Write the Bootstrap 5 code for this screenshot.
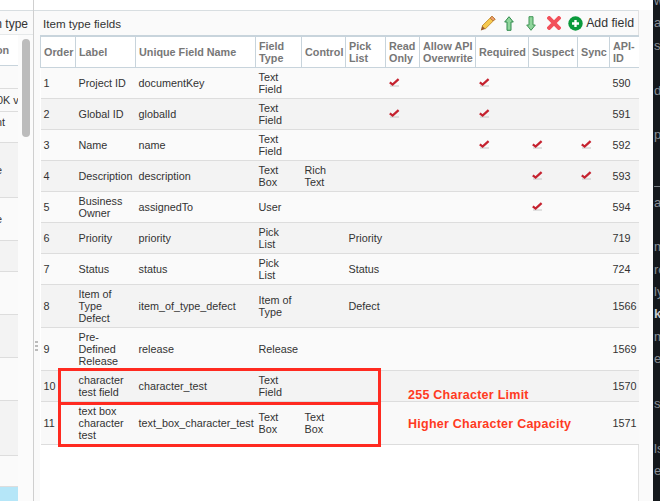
<!DOCTYPE html>
<html lang="en">
<head>
<meta charset="utf-8">
<title>Item type fields</title>
<link rel="stylesheet" href="https://cdn.jsdelivr.net/npm/bootstrap@5.3.0/dist/css/bootstrap.min.css">
<style>
html,body{margin:0;height:501px;width:660px;overflow:hidden;background:#fff}
body{font-family:"Liberation Sans",Arial,sans-serif;font-size:10.8px;line-height:12px;color:#333}
.shell{height:501px}
.topgap{height:10px;flex:none;background:#fff}
.pane-left{width:33px;flex:none}
.pane-left-in{flex:1;min-height:0;border-top:1px solid #d8dee1;background:#fbfbfb;position:relative}
.band{height:24px;flex:none;background:#fafafa;font-size:11.6px;line-height:24px}
.band-left{display:flex;justify-content:flex-end;padding-right:5px;border-bottom:1px solid #e6e9ea;white-space:nowrap;overflow:hidden;font-size:12px;line-height:26px}
.band-left span{flex:none}
.bandtxt{padding-top:2px}
.ltable{width:18px;overflow:hidden}
.lrow{display:flex;align-items:center;white-space:nowrap;border-bottom:1px solid #ddd;flex:none;background:#fafafa}
.lrow span{flex:none}
.lrow.alt{background:#f3f3f3}
.lrow.head{height:31px;background:#fff;font-weight:700;color:#777;border-bottom:1px solid #c8d4dc;margin-top:0}
.h23{height:23px}.h31{height:31px}.h43{height:43px}.h55{height:55px}
.lrow.sel{background:#b5e6f8;border:0;height:14px;align-items:flex-start;padding-top:11px}
.cut4{margin-left:-4px}.cut2{margin-left:-3px}.raise{padding-bottom:10px}
.thumb{position:absolute;left:22px;top:28px;width:8px;height:98px;border-radius:4px;background:#bcbcbc}
.splitter{width:7px;flex:none;border-left:1px solid #cfcfcf;background:#fafafa;position:relative}
.pane-split-top{border-top:1px solid #d8dee1;flex:1}
.grip{position:absolute;left:1px;top:341px;width:3px;height:10px;background:repeating-linear-gradient(#bbb 0 2px,transparent 2px 4px)}
.pane-main{width:598px;flex:none;position:relative}
.pane-main-in{flex:1;border-top:1px solid #d8dee1;min-height:0}
.band-main{padding-left:3px;padding-right:4px}
.tool{display:block;flex:none}
.gap-up{margin-left:8px}.gap-down{margin-left:12px}.gap-x{margin-left:11px}.gap-add{margin-left:7px}
.addtxt{font-size:12.3px;color:#333;margin-left:3px}
.ftable{table-layout:fixed;width:598px;margin:0;border-collapse:collapse;font-size:10.8px;line-height:12px;color:#333}
.ftable th,.ftable td{padding:3px;vertical-align:middle;color:#333;box-shadow:none}
.ftable th{font-weight:700;color:#777;background:#fff;border-top:2px solid #c8d4dc;border-bottom:1px solid #c8d4dc;border-left:1px solid #c8d4dc;height:31px;line-height:12px;padding:2px 0 2px 3px}
.ftable td{border:0;border-bottom:1px solid #ddd;background:#fafafa}
.ftable tbody tr:nth-child(even) td{background:#f3f3f3}
.ftable tbody tr:nth-child(11) td{background:#f9f9f9}
.ck{display:block}
.gutter{width:15px;flex:none;background:#fff}
.gutter-in{flex:1;border-left:1px solid #e2e2e2;background:#fafafa;margin-top:10px}
.darkside{width:7px;flex:none;background:#14181c;color:#8b9095;font-size:13px;overflow:hidden;padding-left:1px}
.darkline{height:22.4px;line-height:22.4px;white-space:nowrap;overflow:hidden}
.darkline:first-child{margin-top:-10px}
.darkline.strong{font-weight:700;color:#c8ccd0}
.box{position:absolute;left:18px;width:323px;border:3px solid #ff2a20;pointer-events:none}
.box-a{top:368px;height:37px}
.box-b{top:402px;height:45px}
.note{position:absolute;left:368px;font-size:12.5px;line-height:14px;font-weight:700;color:#ff3a22;white-space:nowrap;letter-spacing:.25px}
.note-a{top:388px}.note-b{top:417px}
</style>
</head>
<body>
<svg width="0" height="0" class="d-block position-absolute">
  <defs>
    <g id="chk">
      <path d="M1 8 L10 8" stroke="#c4c4c4" stroke-width="1"/>
      <path d="M.8 4.4 L3.6 6.6 L9.6 1.2" fill="none" stroke="#c5222f" stroke-width="2.3"/>
    </g>
  </defs>
</svg>
<div class="shell d-flex">
  <div class="pane-left d-flex flex-column">
    <div class="topgap"></div>
    <div class="pane-left-in d-flex flex-column">
      <div class="band band-left"><span>Item type</span></div>
      <div class="ltable d-flex flex-column">
        <div class="lrow head"><span class="cut4">on</span></div>
        <div class="lrow h23"></div>
        <div class="lrow h23"><span class="cut2">0K version</span></div>
        <div class="lrow h31 raise"><span class="cut4">nt</span></div>
        <div class="lrow h55 alt"><span class="cut4">e</span></div>
        <div class="lrow h43"><span class="cut4">e</span></div>
        <div class="lrow h31 alt"></div>
        <div class="lrow h43"></div>
        <div class="lrow h43 alt"></div>
        <div class="lrow h43"></div>
        <div class="lrow h55 alt"></div>
        <div class="lrow h31"></div>
        <div class="lrow sel"><span class="cut4">w</span></div>
      </div>
      <div class="thumb"></div>
    </div>
  </div>
  <div class="splitter d-flex flex-column">
    <div class="topgap"></div>
    <div class="pane-split-top"></div>
    <div class="grip"></div>
  </div>
  <div class="pane-main d-flex flex-column">
    <div class="topgap"></div>
    <div class="pane-main-in">
      <div class="band band-main d-flex align-items-center">
        <span class="me-auto bandtxt">Item type fields</span>
        <svg class="tool" width="16" height="16" viewBox="0 0 16 16" aria-hidden="true"><path d="M12 1.2 L15 4.2 L5.2 14 L2 11 Z" fill="#f6c94e" stroke="#c9963a" stroke-width="1"/><path d="M12 1.2 L15 4.2 L13.2 6 L10.2 3 Z" fill="#f0a070" stroke="#b8783a" stroke-width="1"/><path d="M2 11 L5.2 14 L.8 15.4 Z" fill="#9a5a28"/></svg>
        <svg class="tool gap-up" width="10" height="15" viewBox="0 0 10 15" aria-hidden="true"><path d="M5 .7 L9.3 6 H7 V14.3 H3 V6 H.7 Z" fill="#8fd59b" stroke="#2f8a4c" stroke-width="1"/></svg>
        <svg class="tool gap-down" width="10" height="15" viewBox="0 0 10 15" aria-hidden="true"><path d="M5 14.3 L9.3 9 H7 V.7 H3 V9 H.7 Z" fill="#8fd59b" stroke="#3f9455" stroke-width="1"/></svg>
        <svg class="tool gap-x" width="14" height="14" viewBox="0 0 14 14" aria-hidden="true"><path d="M2.2 2.2 L11.8 11.8 M11.8 2.2 L2.2 11.8" stroke="#f2505a" stroke-width="4" stroke-linecap="square"/></svg>
        <svg class="tool gap-add" width="15" height="15" viewBox="0 0 15 15" aria-hidden="true"><circle cx="7.5" cy="7.5" r="7.2" fill="#0a9a3c"/><path d="M7.5 4 V11 M4 7.5 H11" stroke="#fff" stroke-width="2.4"/></svg>
        <span class="addtxt">Add field</span>
      </div>
      <table class="table ftable">
        <colgroup><col width="35"><col width="60"><col width="120"><col width="46"><col width="44"><col width="40"><col width="34"><col width="56"><col width="53"><col width="49"><col width="32"><col width="29"></colgroup>
        <thead>
          <tr><th>Order</th><th>Label</th><th>Unique Field Name</th><th>Field Type</th><th>Control</th><th>Pick List</th><th>Read Only</th><th>Allow API Overwrite</th><th>Required</th><th>Suspect</th><th>Sync</th><th>API-ID</th></tr>
        </thead>
        <tbody>
          <tr><td>1</td><td>Project ID</td><td>documentKey</td><td>Text Field</td><td></td><td></td><td><svg class="ck" width="11" height="9"><use href="#chk"/></svg></td><td></td><td><svg class="ck" width="11" height="9"><use href="#chk"/></svg></td><td></td><td></td><td>590</td></tr>
          <tr><td>2</td><td>Global ID</td><td>globalId</td><td>Text Field</td><td></td><td></td><td><svg class="ck" width="11" height="9"><use href="#chk"/></svg></td><td></td><td><svg class="ck" width="11" height="9"><use href="#chk"/></svg></td><td></td><td></td><td>591</td></tr>
          <tr><td>3</td><td>Name</td><td>name</td><td>Text Field</td><td></td><td></td><td></td><td></td><td><svg class="ck" width="11" height="9"><use href="#chk"/></svg></td><td><svg class="ck" width="11" height="9"><use href="#chk"/></svg></td><td><svg class="ck" width="11" height="9"><use href="#chk"/></svg></td><td>592</td></tr>
          <tr><td>4</td><td>Description</td><td>description</td><td>Text Box</td><td>Rich Text</td><td></td><td></td><td></td><td></td><td><svg class="ck" width="11" height="9"><use href="#chk"/></svg></td><td><svg class="ck" width="11" height="9"><use href="#chk"/></svg></td><td>593</td></tr>
          <tr><td>5</td><td>Business Owner</td><td>assignedTo</td><td>User</td><td></td><td></td><td></td><td></td><td></td><td><svg class="ck" width="11" height="9"><use href="#chk"/></svg></td><td></td><td>594</td></tr>
          <tr><td>6</td><td>Priority</td><td>priority</td><td>Pick List</td><td></td><td>Priority</td><td></td><td></td><td></td><td></td><td></td><td>719</td></tr>
          <tr><td>7</td><td>Status</td><td>status</td><td>Pick List</td><td></td><td>Status</td><td></td><td></td><td></td><td></td><td></td><td>724</td></tr>
          <tr><td>8</td><td>Item of Type Defect</td><td>item_of_type_defect</td><td>Item of Type</td><td></td><td>Defect</td><td></td><td></td><td></td><td></td><td></td><td>1566</td></tr>
          <tr><td>9</td><td>Pre-Defined Release</td><td>release</td><td>Release</td><td></td><td></td><td></td><td></td><td></td><td></td><td></td><td>1569</td></tr>
          <tr><td>10</td><td>character test field</td><td>character_test</td><td>Text Field</td><td></td><td></td><td></td><td></td><td></td><td></td><td></td><td>1570</td></tr>
          <tr><td>11</td><td>text box character test</td><td>text_box_character_test</td><td>Text Box</td><td>Text Box</td><td></td><td></td><td></td><td></td><td></td><td></td><td>1571</td></tr>
        </tbody>
      </table>
    </div>
    <div class="box box-a"></div>
    <div class="box box-b"></div>
    <div class="note note-a">255 Character Limit</div>
    <div class="note note-b">Higher Character Capacity</div>
  </div>
  <div class="gutter d-flex flex-column"><div class="gutter-in"></div></div>
  <div class="darkside">
    <div class="darkline">w</div><div class="darkline">at</div><div class="darkline">st</div><div class="darkline"></div><div class="darkline">di</div><div class="darkline"></div><div class="darkline">p</div><div class="darkline"></div><div class="darkline">_</div><div class="darkline">a:</div><div class="darkline"></div><div class="darkline">m</div><div class="darkline">ro</div><div class="darkline">ly</div><div class="darkline strong">k</div><div class="darkline">m</div><div class="darkline">e</div><div class="darkline"></div><div class="darkline">sl</div><div class="darkline"></div><div class="darkline">ls</div><div class="darkline">e</div>
  </div>
</div>
<script src="https://cdn.jsdelivr.net/npm/bootstrap@5.3.0/dist/js/bootstrap.bundle.min.js"></script>
</body>
</html>
